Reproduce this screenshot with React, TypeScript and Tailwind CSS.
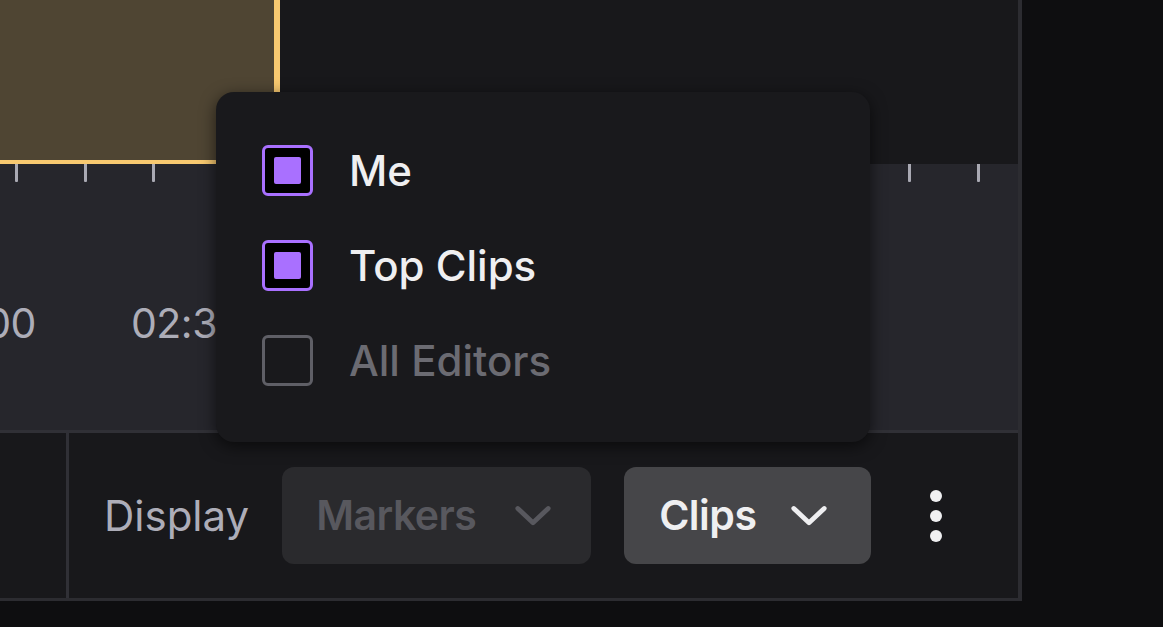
import React from 'react';

const ticks = Array.from({ length: 15 }, (_, i) => i);

const labels = [
  { text: '02:00', left: -76 },
  { text: '02:30', left: 131 },
];

const Check: React.FC<{ on: boolean }> = ({ on }) =>
  on ? (
    <div className="w-[51px] h-[51px] shrink-0 rounded-[6px] border-[3px] border-[#a970ff] bg-black flex items-center justify-center">
      <div className="w-[27px] h-[27px] rounded-[2px] bg-[#a970ff]" />
    </div>
  ) : (
    <div className="w-[51px] h-[51px] shrink-0 rounded-[6px] border-[3px] border-[#5f5f66]" />
  );

const Chevron: React.FC<{ className?: string }> = ({ className }) => (
  <svg viewBox="0 0 40 24" className={className} fill="none" stroke="currentColor" strokeWidth="5" strokeLinecap="round" strokeLinejoin="round">
    <path d="M4 4 L20 19 L36 4" />
  </svg>
);

export default function App() {
  return (
    <div className="relative w-full h-[627px] overflow-hidden bg-[#0e0e10]" style={{ fontFamily: 'Inter, "Noto Sans", sans-serif' }}>
      <div className="w-[1022px] h-[601px] flex flex-col bg-[#18181b] border-r-[4px] border-b-[3px] border-[#2c2c31]">
        {/* clip lane */}
        <div className="h-[164px] shrink-0 flex">
          <div className="w-[280px] h-full bg-[#4f4533] border-r-[6px] border-b-[4px] border-[#f8c970]" />
        </div>

        {/* ruler */}
        <div className="relative h-[266px] shrink-0 bg-[#26262c] overflow-hidden">
          <div className="flex gap-[65.7px] pl-[15px]">
            {ticks.map(t => (
              <div key={t} className="w-[3px] h-[18px] shrink-0 rounded-b-[1px] bg-[#a9a9b3]" />
            ))}
          </div>
          {labels.map(l => (
            <span
              key={l.text}
              className="absolute top-[136px] text-[41px] leading-[46px] tracking-[-0.5px] text-[#adadb8]"
              style={{ left: l.left }}
            >
              {l.text}
            </span>
          ))}
        </div>

        {/* toolbar */}
        <div className="flex-1 flex border-t-[3px] border-[#303036]">
          <div className="w-[69px] shrink-0 border-r-[3px] border-[#303036]" />
          <div className="flex-1 flex items-center gap-[33px] pl-[35px]">
            <span className="text-[42px] text-[#adadb8]">Display</span>
            <button className="h-[97px] w-[309px] flex items-center justify-between pl-[34px] pr-[39px] rounded-[12px] bg-[#2a2a2d] text-[#58585e]">
              <span className="text-[41px] tracking-[-0.5px] font-semibold">Markers</span>
              <Chevron className="w-[38px] h-[24px]" />
            </button>
            <button className="h-[97px] w-[247px] flex items-center justify-between pl-[35px] pr-[43px] rounded-[12px] bg-[#464649] text-[#efeff1]">
              <span className="text-[41px] tracking-[-0.5px] font-semibold">Clips</span>
              <Chevron className="w-[38px] h-[24px]" />
            </button>
            <button className="w-[64px] h-[97px] flex flex-col items-center justify-center gap-[8px]">
              <span className="w-[12px] h-[12px] rounded-full bg-[#efeff1]" />
              <span className="w-[12px] h-[12px] rounded-full bg-[#efeff1]" />
              <span className="w-[12px] h-[12px] rounded-full bg-[#efeff1]" />
            </button>
          </div>
        </div>
      </div>

      {/* filter popover */}
      <div className="absolute left-[216px] top-[92px] w-[654px] h-[350px] rounded-[18px] bg-[#19191c] shadow-[0_4px_16px_rgba(0,0,0,0.6)] flex flex-col gap-[44px] pt-[53px] pl-[46px]">
        {[
          { label: 'Me', on: true },
          { label: 'Top Clips', on: true },
          { label: 'All Editors', on: false },
        ].map(item => (
          <div key={item.label} className="h-[51px] flex items-center gap-[36px]">
            <Check on={item.on} />
            <span className={`text-[42px] leading-none font-medium ${item.on ? 'text-[#efeff1]' : 'text-[#6b6b72]'}`}>{item.label}</span>
          </div>
        ))}
      </div>
    </div>
  );
}
